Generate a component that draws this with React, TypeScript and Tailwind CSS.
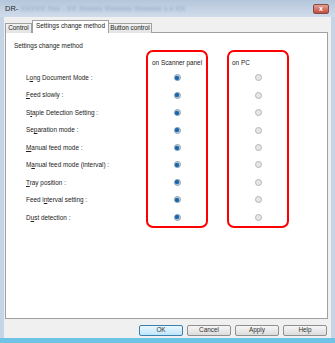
import React from "react";

const rows: { pre: string; key: string; post: string }[] = [
  { pre: "L", key: "o", post: "ng Document Mode :" },
  { pre: "", key: "F", post: "eed slowly :" },
  { pre: "S", key: "t", post: "aple Detection Setting :" },
  { pre: "Se", key: "p", post: "aration mode :" },
  { pre: "", key: "M", post: "anual feed mode :" },
  { pre: "M", key: "a", post: "nual feed mode (interval) :" },
  { pre: "", key: "T", post: "ray position :" },
  { pre: "Feed i", key: "n", post: "terval setting :" },
  { pre: "D", key: "u", post: "st detection :" },
];

function RadioOn() {
  return (
    <div className="w-[7px] h-[7px] rounded-full border border-[#8d9aa6] bg-[#dfe7ee] flex items-center justify-center">
      <div className="w-[4px] h-[4px] rounded-full bg-[#1f64a0] shadow-[0_0_0_0.5px_#5aa0d8]" />
    </div>
  );
}

function RadioOff() {
  return <div className="w-[7px] h-[7px] rounded-full border border-[#b5b5b5] bg-[#e6e6e6]" />;
}

function Btn({ label, primary }: { label: string; primary?: boolean }) {
  return (
    <div
      className={
        "w-[44px] h-[11px] rounded-[2px] flex items-center justify-center leading-none text-[#333] " +
        (primary
          ? "border border-[#3c7fb1] bg-gradient-to-b from-[#eaf6fd] to-[#bee6fd]"
          : "border border-[#8e8f8f] bg-gradient-to-b from-[#f6f6f6] to-[#dcdcdc]")
      }
    >
      {label}
    </div>
  );
}

export default function App() {
  return (
    <div className="w-[335px] h-[343px] flex flex-col bg-[#c6d5e6] font-['Liberation_Sans',Arial,sans-serif] text-[6.4px] text-[#222] overflow-hidden">
      {/* title bar */}
      <div className="h-[17px] flex items-center bg-gradient-to-b from-[#b4c6db] to-[#d0dcea] pl-[5px] pr-[6px]">
        <span className="text-[7.5px] text-[#2a2a2a] leading-none">DR-</span>
        <span className="text-[7.5px] leading-none text-[#8ea6c6] blur-[1.3px] ml-[2px] whitespace-nowrap">
          XXXXX Xxx - XX Xxxxxx Xxxxxxx Xxxxxxx x.x XX
        </span>
        <div className="ml-auto w-[16px] h-[10px] rounded-[2px] border border-[#8a4a44] bg-gradient-to-b from-[#e0a196] to-[#c24a3c] flex items-center justify-center">
          <span className="text-white text-[7px] font-bold leading-none">x</span>
        </div>
      </div>

      {/* body */}
      <div className="flex-1 flex flex-col bg-[#f0f0f0] mx-[4px]">
        {/* tabs */}
        <div className="h-[15px] flex items-end pl-[1px] relative z-10">
          <div className="w-[27px] h-[10px] border border-[#a0a0a0] border-b-0 bg-gradient-to-b from-[#f2f2f2] to-[#e3e3e3] flex items-center justify-center leading-none whitespace-nowrap -mb-[1px]">
            Control
          </div>
          <div className="w-[77px] h-[13px] border border-[#a0a0a0] border-b-0 bg-white flex items-center justify-center leading-none whitespace-nowrap -mb-[1px] pb-[2px]">
            Settings change method
          </div>
          <div className="w-[43px] h-[10px] border border-[#a0a0a0] border-b-0 border-l-0 bg-gradient-to-b from-[#f2f2f2] to-[#e3e3e3] flex items-center justify-center leading-none whitespace-nowrap -mb-[1px]">
            Button control
          </div>
        </div>

        {/* panel */}
        <div className="h-[287px] ml-[1px] mr-[3px] border border-[#a0a0a0] bg-white flex flex-col">
          <div className="pt-[9px] pl-[8px] leading-[8px] h-[17px]">Settings change method</div>
          <div className="flex pl-[20px]">
            <div className="w-[120px] pt-[19px] flex flex-col">
              {rows.map((r, i) => (
                <div key={i} className="h-[17.5px] flex items-center leading-none whitespace-nowrap">
                  <span>
                    {r.pre}
                    <span className="underline underline-offset-1">{r.key}</span>
                    {r.post}
                  </span>
                </div>
              ))}
            </div>
            <div className="w-[62px] h-[178px] border-2 border-[#ff0000] rounded-[7px] flex flex-col">
              <div className="h-[17px] pt-[7px] pl-[4px] leading-[8px] whitespace-nowrap">on Scanner panel</div>
              {rows.map((_, i) => (
                <div key={i} className="h-[17.5px] flex items-center justify-center">
                  <RadioOn />
                </div>
              ))}
            </div>
            <div className="w-[62px] h-[178px] ml-[19px] border-2 border-[#ff0000] rounded-[7px] flex flex-col">
              <div className="h-[17px] pt-[7px] pl-[3px] leading-[8px] whitespace-nowrap">on PC</div>
              {rows.map((_, i) => (
                <div key={i} className="h-[17.5px] flex items-center justify-center">
                  <RadioOff />
                </div>
              ))}
            </div>
          </div>
        </div>

        {/* buttons */}
        <div className="flex justify-end gap-[4px] pt-[6px] pr-[4px]">
          <Btn label="OK" primary />
          <Btn label="Cancel" />
          <Btn label="Apply" />
          <Btn label="Help" />
        </div>
      </div>

      {/* bottom frame */}
      <div className="h-[5px] bg-[#6fc3e6]" />
    </div>
  );
}
